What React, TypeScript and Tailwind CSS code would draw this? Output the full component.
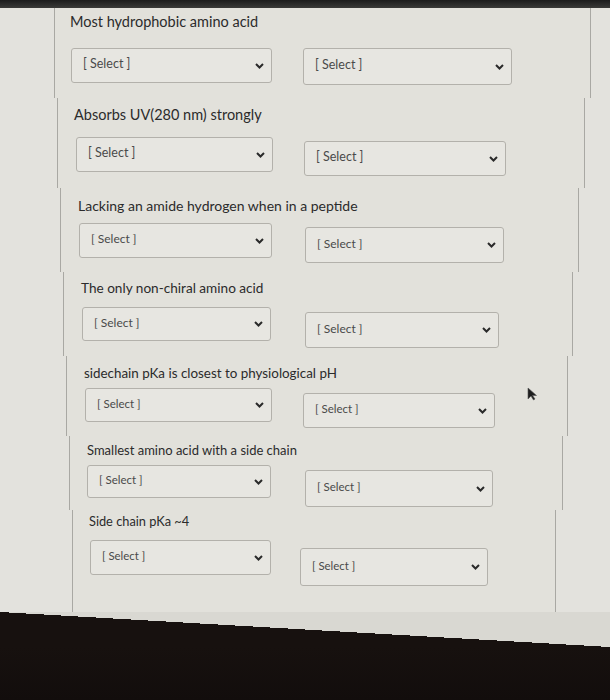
type Row = {
  text: string;
  box: string;
  label: string;
  row: string;
  left: string;
  right: string;
  sel: string;
};

// each question block sits a little further in than the one above it
const rows: Row[] = [
  {
    text: "Most hydrophobic amino acid",
    box: "ml-[54px] mr-[19px] h-[90px] pt-[5px]",
    label: "pl-[15px] text-[14.5px] leading-[18px]",
    row: "mt-[17px] pl-[16px] gap-[31px]",
    left: "w-[201px] h-[35px]",
    right: "w-[209px] h-[37px]",
    sel: "text-[12.5px]",
  },
  {
    text: "Absorbs UV(280 nm) strongly",
    box: "ml-[57px] mr-[25px] h-[90px] pt-[8px]",
    label: "pl-[16px] text-[14.5px] leading-[18px]",
    row: "mt-[13px] pl-[18px] gap-[31px]",
    left: "w-[197px] h-[35px]",
    right: "w-[202px] h-[35px] mt-[4px]",
    sel: "text-[12.5px]",
  },
  {
    text: "Lacking an amide hydrogen when in a peptide",
    box: "ml-[60px] mr-[31px] h-[84px] pt-[9px]",
    label: "pl-[17px] text-[14px] leading-[18px]",
    row: "mt-[8px] pl-[18px] gap-[33px]",
    left: "w-[193px] h-[35px]",
    right: "w-[199px] h-[36px] mt-[4px]",
    sel: "text-[12px]",
  },
  {
    text: "The only non-chiral amino acid",
    box: "ml-[63px] mr-[37px] h-[84px] pt-[8px]",
    label: "pl-[17px] text-[13.6px] leading-[16px]",
    row: "mt-[11px] pl-[18px] gap-[34px]",
    left: "w-[189px] h-[34px]",
    right: "w-[194px] h-[36px] mt-[5px]",
    sel: "text-[12px]",
  },
  {
    text: "sidechain pKa is closest to physiological pH",
    box: "ml-[66px] mr-[42px] h-[80px] pt-[9px]",
    label: "pl-[17px] text-[13.4px] leading-[16px]",
    row: "mt-[7px] pl-[18px] gap-[31px]",
    left: "w-[187px] h-[34px]",
    right: "w-[192px] h-[35px] mt-[5px]",
    sel: "text-[11.5px]",
  },
  {
    text: "Smallest amino acid with a side chain",
    box: "ml-[69px] mr-[47px] h-[74px] pt-[6px]",
    label: "pl-[17px] text-[13px] leading-[16px]",
    row: "mt-[7px] pl-[17px] gap-[34px]",
    left: "w-[184px] h-[33px]",
    right: "w-[188px] h-[37px] mt-[5px]",
    sel: "text-[11.5px]",
  },
  {
    text: "Side chain pKa ~4",
    box: "ml-[72px] mr-[54px] h-[102px] pt-[3px]",
    label: "pl-[16px] text-[12.8px] leading-[16px]",
    row: "mt-[11px] pl-[17px] gap-[29px]",
    left: "w-[181px] h-[35px]",
    right: "w-[188px] h-[38px] mt-[8px]",
    sel: "text-[11.4px]",
  },
];

function Chevron() {
  return (
    <svg width="9" height="6" viewBox="0 0 9 6" className="shrink-0">
      <path d="M1 1 L4.5 4.5 L8 1" fill="none" stroke="#2a2a2a" strokeWidth="2" />
    </svg>
  );
}

function Select({ className, size }: { className: string; size: string }) {
  return (
    <div
      className={`flex shrink-0 items-center justify-between rounded-[3px] border border-[#b3b1ab] bg-[#e7e6e1] pl-[11px] pr-[7px] ${className}`}
    >
      <span className={`-mt-[3px] text-[#4a4a4a] ${size}`}>[ Select ]</span>
      <Chevron />
    </div>
  );
}

export default function App() {
  return (
    <div className="relative flex h-[700px] w-[610px] flex-col overflow-hidden bg-[#e3e2dd] font-['Lato',sans-serif]">
      {/* monitor bezel at the top */}
      <div className="h-[8px] shrink-0 bg-gradient-to-b from-[#1c1c1c] to-[#3a3a38]" />

      {rows.map((r) => (
        <div key={r.text} className={`shrink-0 border-x border-[#a9a8a3] bg-[#e2e1db] ${r.box}`}>
          <p className={`text-[#2b2b2b] ${r.label}`}>{r.text}</p>
          <div className={`flex items-start ${r.row}`}>
            <Select className={r.left} size={r.sel} />
            <Select className={r.right} size={r.sel} />
          </div>
        </div>
      ))}

      {/* desk edge below the screen */}
      <div className="h-[35px] shrink-0 bg-[linear-gradient(to_top_right,#17110f_50%,#d9d8d2_50%)]" />
      <div className="flex-1 bg-gradient-to-b from-[#17110f] to-[#120d0c]" />

      {/* mouse pointer */}
      <svg width="11" height="14" viewBox="0 0 11 14" className="absolute left-[527px] top-[387px]">
        <path d="M1 1 L1 12 L4 9 L6.5 13 L8 12 L5.5 8.5 L9.5 8.5 Z" fill="#1e1e1e" stroke="#555" strokeWidth="0.6" />
      </svg>
    </div>
  );
}
